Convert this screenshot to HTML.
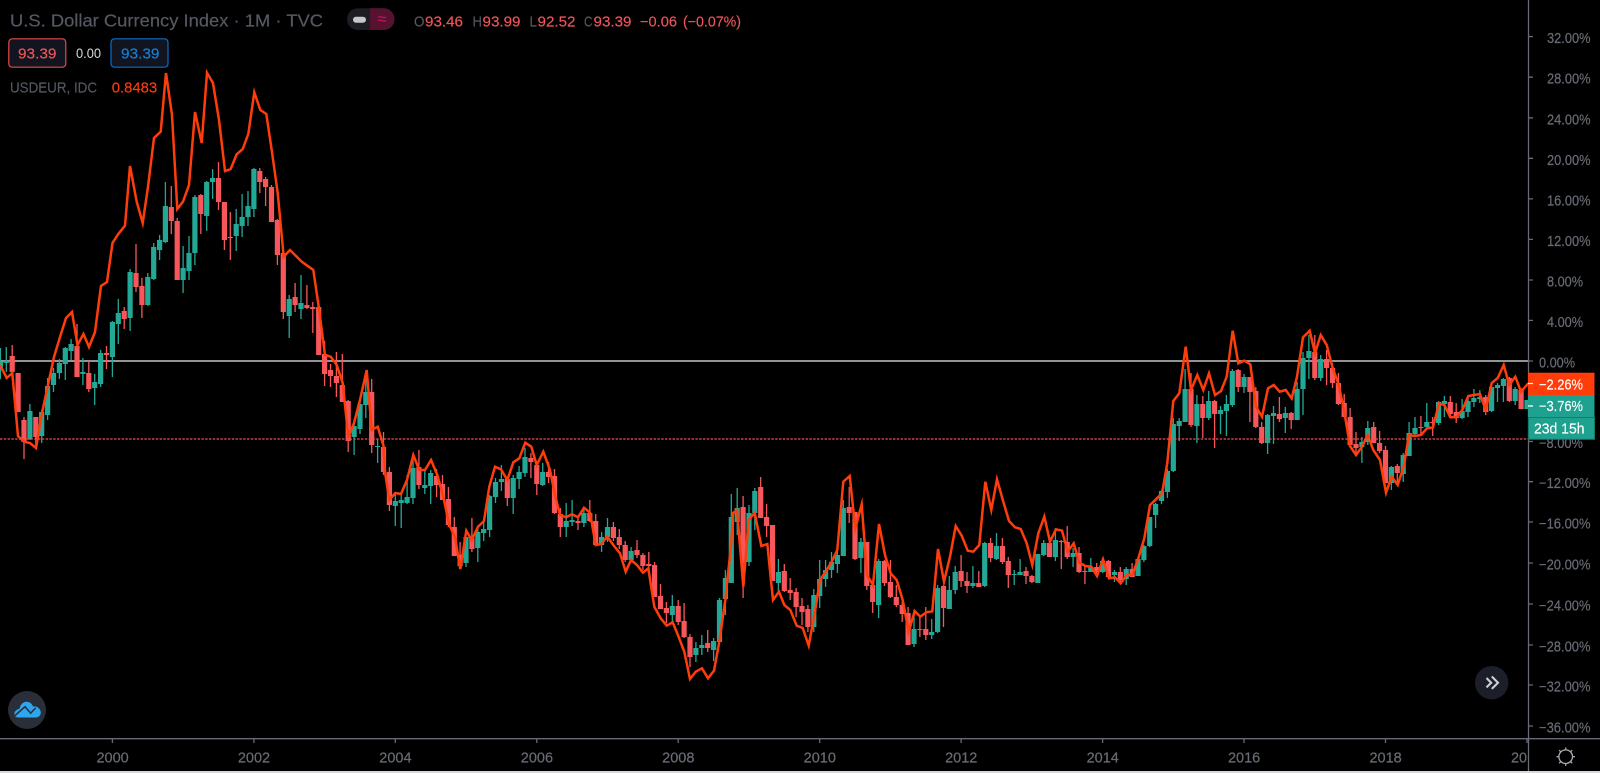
<!DOCTYPE html>
<html><head><meta charset="utf-8"><title>U.S. Dollar Currency Index</title>
<style>
html,body{margin:0;padding:0;background:#000;width:1600px;height:773px;overflow:hidden}
svg{display:block;font-family:"Liberation Sans",sans-serif}
</style></head><body>
<svg width="1600" height="773" viewBox="0 0 1600 773" xmlns="http://www.w3.org/2000/svg">
<defs><clipPath id="c"><rect x="0" y="0" width="1528" height="738"/></clipPath></defs>
<rect width="1600" height="773" fill="#000"/>
<rect x="0" y="771" width="1600" height="2" fill="#d8d8da"/>
<rect x="0" y="360.2" width="1528" height="1.6" fill="#b8b8bc"/>
<g clip-path="url(#c)" fill="none">
<g stroke="#24a896">
<path stroke-width="1.3" d="M0.4 348V379M6.3 347V372M29.9 404V440M41.7 410V443M47.6 378V420M53.5 368V392M59.4 359V379M65.3 347V380M71.1 339V360M82.9 358V385M94.7 374V405M100.6 350V387M112.4 321V377M118.3 299V344M130.1 269V331M147.8 273V306M153.7 243V280M159.6 235V260M165.4 182V243M183.1 246V293M189 236V280M194.9 195V265M206.7 181V231M212.6 169V199M236.2 209V251M242.1 194V237M248 191V226M253.9 168V217M289.2 295V338M301 275V319M354.1 420V455M360 399V434M365.8 378V418M377.6 439V463M395.3 494V526M401.2 495V528M407.1 475V504M413 458V504M424.8 469V494M430.7 470V504M466 537V567M477.8 527V562M483.7 520V541M489.6 495V537M495.5 478V503M501.4 465V491M513.2 475V514M519.1 466V489M525 448V477M542.7 463V486M566.2 503V537M572.1 500V526M583.9 508V527M601.6 532V552M607.5 518V542M631.1 547V562M672.3 595V622M695.9 642V662M701.8 635V655M713.6 638V661M719.5 598V642M725.4 570V615M731.3 494V583M737.2 488V535M749 505V566M754.8 488V530M778.4 559V592M813.8 589V632M819.7 560V608M825.6 560V587M831.5 552V578M837.4 547V573M843.3 500V556M860.9 538V573M878.6 559V618M914 610V647M931.7 619V639M937.6 585V633M949.3 576V609M955.2 566V594M972.9 566V588M984.7 542V587M996.5 533V560M1014.2 570V585M1020.1 559V575M1037.8 554V583M1043.7 540V556M1055.4 528V561M1073.1 548V567M1090.8 558V572M1102.6 558V573M1114.4 570V582M1126.2 567V585M1138 559V576M1143.9 545V562M1149.7 517V547M1155.6 503V528M1161.5 490V504M1167.4 469V498M1173.3 418V472M1179.2 418V441M1185.1 369V422M1196.9 395V443M1208.7 391V420M1220.5 406V434M1226.4 395V436M1232.3 369V407M1244 374V393M1267.6 414V454M1273.5 406V444M1285.3 407V433M1297.1 382V420M1303 352V415M1308.9 335V379M1320.7 355V381M1361.9 437V463M1367.8 421V445M1391.4 466V490M1403.2 453V482M1409.1 422V456M1415 417V436M1426.8 403V428M1438.6 401V425M1444.4 396V417M1462.1 399V419M1468 395V417M1473.9 389V407M1479.8 390V403M1491.6 387V412M1497.5 383V402M1503.4 378V402M1515.2 387V405M1527 400V409"/>
<path stroke-width="5.2" d="M0.4 362V370M6.3 361V363M29.9 411V439M41.7 412V436M47.6 386V415M53.5 373V385M59.4 363V373M65.3 348V364M71.1 344V351M82.9 372V374M94.7 382V388M100.6 353V384M112.4 322V357M118.3 313V324M130.1 272V318M147.8 277V305M153.7 247V279M159.6 240V250M165.4 206V242M183.1 268V280M189 253V271M194.9 197V253M206.7 182V216M212.6 178V182M236.2 224V236M242.1 217V226M248 206V217M253.9 169V209M289.2 299V316M301 303V309M354.1 426V437M360 404V429M365.8 392V405M377.6 446V447M395.3 501V506M401.2 500V503M407.1 497V503M413 468V498M424.8 485V488M430.7 473V486M466 537V563M477.8 532V548M483.7 529V533M489.6 496V530M495.5 482V497M501.4 479V482M513.2 478V498M519.1 472V479M525 457V473M542.7 472V485M566.2 521V527M572.1 520V522M583.9 513V523M601.6 537V545M607.5 527V537M631.1 551V560M672.3 606V615M695.9 648V655M701.8 645V648M713.6 641V650M719.5 600V642M725.4 578V599M731.3 517V583M737.2 508V522M749 513V562M754.8 491V513M778.4 572V583M813.8 595V627M819.7 579V596M825.6 570V579M831.5 562V570M837.4 555V564M843.3 508V556M860.9 542V558M878.6 561V605M914 629V644M931.7 632V635M937.6 588V632M949.3 590V609M955.2 572V590M972.9 583V586M984.7 543V586M996.5 546V559M1014.2 574V575M1020.1 572V575M1037.8 554V583M1043.7 543V555M1055.4 540V557M1073.1 553V557M1090.8 567V572M1102.6 561V572M1114.4 572V575M1126.2 569V579M1138 559V576M1143.9 546V560M1149.7 517V546M1155.6 504V515M1161.5 491V501M1167.4 471V492M1173.3 424V471M1179.2 421V426M1185.1 389V422M1196.9 404V426M1208.7 401V418M1220.5 410V414M1226.4 404V411M1232.3 371V405M1244 377V387M1267.6 415V443M1273.5 413V416M1285.3 413V418M1297.1 389V420M1303 358V389M1308.9 351V358M1320.7 359V378M1361.9 442V447M1367.8 428V442M1391.4 467V483M1403.2 455V474M1409.1 433V456M1415 428V434M1426.8 422V427M1438.6 402V423M1444.4 401V404M1462.1 411V418M1468 401V412M1473.9 398V402M1479.8 397V399M1491.6 387V411M1497.5 385V388M1503.4 379V386M1515.2 389V401M1527 400V409"/>
</g>
<g stroke="#f7565a">
<path stroke-width="1.3" d="M12.2 345V372M18.1 373V412M24 417V459M35.8 417V447M77 324V377M88.8 361V392M106.5 346V369M124.2 307V329M136 244V292M141.9 278V318M171.3 186V234M177.2 218V280M200.8 194V234M218.5 162V210M224.4 202V250M230.3 212V260M259.8 168V193M265.6 177V206M271.5 185V222M277.4 219V265M283.3 250V319M295.1 283V312M306.9 285V309M312.8 302V333M318.7 300V355M324.6 341V386M330.5 364V387M336.4 352V397M342.3 354V402M348.2 400V452M371.7 379V453M383.5 432V475M389.4 467V511M418.9 450V489M436.6 469V497M442.5 475V500M448.4 487V527M454.3 517V556M460.1 542V569M471.9 518V552M507.3 478V506M530.9 453V478M536.8 465V495M548.6 462V483M554.5 469V514M560.3 508V537M578 518V530M589.8 500V522M595.7 514V545M613.4 522V541M619.3 529V549M625.2 541V562M637 540V558M642.9 553V570M648.8 552V570M654.6 562V597M660.5 584V609M666.4 602V623M678.2 600V625M684.1 603V638M690 634V667M707.7 630V652M743.1 496V598M760.7 477V518M766.6 504V537M772.5 525V581M784.3 564V592M790.2 578V600M796.1 588V617M802 598V625M807.9 605V632M849.2 487V523M855 512V560M866.8 542V590M872.7 583V613M884.5 560V586M890.4 560V598M896.3 585V607M902.2 602V622M908.1 607V645M919.9 616V637M925.8 607V640M943.5 585V627M961.1 555V587M967 572V593M978.8 571V587M990.6 538V562M1002.4 538V564M1008.3 557V588M1026 567V584M1031.9 575V583M1049.5 542V557M1061.3 540V569M1067.2 526V559M1079 547V573M1084.9 566V584M1096.7 563V576M1108.5 560V577M1120.3 567V583M1132.1 563V577M1191 373V427M1202.8 396V438M1214.6 400V448M1238.2 369V392M1249.9 377V422M1255.8 387V428M1261.7 422V444M1279.4 397V422M1291.2 412V429M1314.8 335V380M1326.6 350V385M1332.5 363V388M1338.4 373V405M1344.2 394V417M1350.1 408V445M1356 432V453M1373.7 422V443M1379.6 431V453M1385.5 446V483M1397.3 464V485M1420.9 416V434M1432.7 417V436M1450.3 396V418M1456.2 403V423M1485.7 395V415M1509.3 377V402M1521.1 388V409"/>
<path stroke-width="5.2" d="M12.2 356V372M18.1 373V412M24 420V442M35.8 417V437M77 346V377M88.8 373V389M106.5 353V355M124.2 311V319M136 273V287M141.9 286V305M171.3 207V221M177.2 221V280M200.8 195V214M218.5 178V202M224.4 202V240M230.3 237V238M259.8 171V182M265.6 179V187M271.5 187V222M277.4 220V255M283.3 253V312M295.1 297V305M306.9 305V308M312.8 307V309M318.7 307V355M324.6 354V374M330.5 370V376M336.4 376V383M342.3 385V402M348.2 401V441M371.7 392V445M383.5 447V472M389.4 472V505M418.9 467V485M436.6 476V485M442.5 484V500M448.4 499V525M454.3 527V556M460.1 555V566M471.9 538V549M507.3 479V498M530.9 458V462M536.8 465V484M548.6 472V477M554.5 476V513M560.3 514V527M578 521V523M589.8 513V521M595.7 521V545M613.4 527V538M619.3 537V545M625.2 545V560M637 550V555M642.9 555V566M648.8 564V566M654.6 565V597M660.5 596V609M666.4 608V613M678.2 606V622M684.1 621V637M690 637V657M707.7 643V648M743.1 507V563M760.7 487V518M766.6 517V526M772.5 525V581M784.3 571V591M790.2 590V593M796.1 592V607M802 606V612M807.9 609V627M849.2 507V513M855 512V559M866.8 542V586M872.7 585V602M884.5 561V583M890.4 582V597M896.3 597V605M902.2 605V614M908.1 613V645M919.9 629V630M925.8 629V635M943.5 586V608M961.1 571V581M967 581V586M978.8 583V587M990.6 543V558M1002.4 546V562M1008.3 561V575M1026 571V576M1031.9 576V582M1049.5 543V557M1061.3 541V542M1067.2 542V557M1079 553V572M1084.9 571V572M1096.7 567V572M1108.5 561V577M1120.3 572V580M1132.1 569V577M1191 389V425M1202.8 404V418M1214.6 401V414M1238.2 370V387M1249.9 377V392M1255.8 391V427M1261.7 427V443M1279.4 414V419M1291.2 413V420M1314.8 352V378M1326.6 359V368M1332.5 368V383M1338.4 383V404M1344.2 403V417M1350.1 417V445M1356 444V448M1373.7 427V443M1379.6 443V451M1385.5 450V483M1397.3 466V473M1420.9 427V428M1432.7 422V423M1450.3 402V414M1456.2 412V418M1485.7 397V412M1509.3 378V401M1521.1 390V409"/>
</g>
<polyline stroke="#ff3d0b" stroke-width="2.5" stroke-linejoin="miter" stroke-miterlimit="6" points="0,365 6.7,378 12.3,373 18,436 24,441.7 30,443 36,448 42,413 48,385 54,357 60,337 66,318 72,312 77.5,345 83.5,334 89,347 95,332 101,286 107,282 112.5,243 118.3,234 125,225.7 130,166 136.7,201.7 142.7,223 148,186.7 154,138 160.7,131.7 166,73 172,115 177.3,209 183,201.7 189,185 195,112 201.7,143 207,72.7 213,83 219,120 225,171 230.7,169 236.7,154.3 242.7,149 248.3,134 254.3,92.3 260.3,110 266.3,114 271.7,150 277.7,193 283.7,256.7 290,250 301.7,261.7 313.3,270 318.7,306.7 325,355 330.7,356.7 336.7,365 342.7,383 348.3,436.7 354,423 360,400 366.7,370 371.7,430 377.7,426.7 383.7,446.7 385,472 389.3,500 395.3,493 401,494 407,480 413.3,455 419.3,470 425,470 431,460 437.3,475 443.3,496.7 449.3,525 455,537 460.3,569 466.3,530.7 471.7,540 478,526.7 484,521 489.3,486.7 495,466.7 501,469.3 507.3,480 513.3,462.3 519.3,458.3 525.3,442.7 531.3,446.7 536.7,465 543.3,451.7 550,470 555,495 560,515 566,517.3 572,514.3 578,517.3 584,507.7 590,512.7 595.7,545 601.3,544 607.3,536.7 613.3,545 620,553.3 625.7,571.7 631,560 637,565 643,572.7 648.3,568.3 654.3,606.7 660.7,618.3 666.7,625.7 672.7,622.3 678.3,636 684.3,651.7 690,679 695.7,671.7 702,668.3 708,678.3 714,670.7 719.3,641.7 725.3,600 731.3,543 733,513 737,510 743.3,586.7 748.7,520 754.7,512.7 761.3,546 767.3,544 773,600 779,591.7 784.3,605 790.3,610 796.7,625.7 802.7,628 808.7,645.7 814.7,613 820,580 825.7,571.7 831.7,561.7 837.3,550 843.3,481.7 849.7,476 855.3,528.3 861.7,504.3 867,575 873,585 879,524 885,555 890.7,573.3 896.7,580 902.7,600 908.7,631.7 914.7,611 920.3,616.7 926.3,612.3 932.3,611.3 938,549 944,581.7 950,556.7 955.7,526 961.7,535.7 967.7,550.7 973.3,551.7 979.3,545 985.3,481.7 991.3,510 997,479.3 1003.3,501.7 1009,521 1015,527.3 1020.7,529 1026.7,543.3 1032.3,565 1038.3,533.3 1044.3,516.7 1050,541.7 1056,529.3 1062,530.7 1067.7,551.7 1073.7,543.3 1079.3,562.7 1085.3,566 1091.3,566.7 1097,576 1103,559.3 1109,578.3 1115,577.3 1120.7,583.3 1126.7,575 1132.3,575 1138.3,558.3 1144.3,538.3 1150,505 1156,499.3 1162,493.3 1167.3,463 1173.3,401 1179.3,393.3 1185.7,346.7 1191,390 1197.3,375 1203.3,390 1209,373.3 1215,395 1221,391 1226.7,376.7 1232.7,330.7 1238.3,363.3 1244.3,360.7 1250.3,364.3 1256,406.7 1262,416.7 1268,388.3 1273.7,385 1279.7,391.7 1285.7,390 1291.7,398.3 1297,376.7 1303,337.3 1309.7,330.7 1315,353.3 1320.7,335 1326.7,345 1332.7,368.3 1338.3,383.3 1344,410 1350,446 1356,455 1362,446.7 1367.7,435 1373.3,450 1380,460 1386,492.7 1391.7,476.7 1397.7,485 1403.7,466.7 1409,435 1415,436 1421,435 1427,428.3 1433,427.3 1439,403.3 1444.3,405 1450.3,417.3 1456.3,417.3 1462.3,410 1468.3,396 1474.3,395 1480,394 1485.7,410 1491.7,383 1497.7,378 1503.7,365 1509.3,385 1515.3,376.7 1521,391.7 1528.3,383.3"/>
</g>
<line x1="0" y1="439" x2="1528" y2="439" stroke="#f0504f" stroke-width="1.2" stroke-dasharray="2.4 1.4"/>
<g stroke="#686b75" fill="none" stroke-width="1.3">
<path d="M1528.5 0V771M0 738.7H1600"/>
<path d="M1528 36.6h5M1528 77.2h5M1528 117.8h5M1528 158.3h5M1528 198.9h5M1528 239.4h5M1528 280h5M1528 320.4h5M1528 361h5M1528 441.5h5M1528 481.7h5M1528 522h5M1528 563h5M1528 604h5M1528 645h5M1528 685h5M1528 726h5"/>
<path d="M112.4 739v4M253.9 739v4M395.3 739v4M536.8 739v4M678.2 739v4M819.7 739v4M961.1 739v4M1102.6 739v4M1244 739v4M1385.5 739v4M1527 739v4"/>
</g>
<!-- price axis labels -->
<g fill="#686b75" stroke="#686b75" stroke-width="0.2" font-size="14.5">
<text x="1547" y="43" textLength="43.5" lengthAdjust="spacingAndGlyphs">32.00%</text>
<text x="1547" y="83.7" textLength="43.5" lengthAdjust="spacingAndGlyphs">28.00%</text>
<text x="1547" y="124.3" textLength="43.5" lengthAdjust="spacingAndGlyphs">24.00%</text>
<text x="1547" y="164.8" textLength="43.5" lengthAdjust="spacingAndGlyphs">20.00%</text>
<text x="1547" y="205.4" textLength="43.5" lengthAdjust="spacingAndGlyphs">16.00%</text>
<text x="1547" y="245.9" textLength="43.5" lengthAdjust="spacingAndGlyphs">12.00%</text>
<text x="1547" y="286.5" textLength="36" lengthAdjust="spacingAndGlyphs">8.00%</text>
<text x="1547" y="326.9" textLength="36" lengthAdjust="spacingAndGlyphs">4.00%</text>
<text x="1539" y="367.5" textLength="36" lengthAdjust="spacingAndGlyphs">0.00%</text>
<text x="1539" y="448" textLength="44" lengthAdjust="spacingAndGlyphs">−8.00%</text>
<text x="1539" y="488.2" textLength="51.5" lengthAdjust="spacingAndGlyphs">−12.00%</text>
<text x="1539" y="528.5" textLength="51.5" lengthAdjust="spacingAndGlyphs">−16.00%</text>
<text x="1539" y="569.5" textLength="51.5" lengthAdjust="spacingAndGlyphs">−20.00%</text>
<text x="1539" y="610.5" textLength="51.5" lengthAdjust="spacingAndGlyphs">−24.00%</text>
<text x="1539" y="651.5" textLength="51.5" lengthAdjust="spacingAndGlyphs">−28.00%</text>
<text x="1539" y="691.5" textLength="51.5" lengthAdjust="spacingAndGlyphs">−32.00%</text>
<text x="1539" y="732.5" textLength="51.5" lengthAdjust="spacingAndGlyphs">−36.00%</text>
</g>
<!-- tags -->
<rect x="1528" y="372.7" width="66.5" height="22.3" fill="#ff3d0b"/>
<rect x="1528" y="395" width="66.5" height="22" fill="#1fa18f"/>
<rect x="1528.5" y="417.5" width="66" height="21.8" fill="#1fa18f" stroke="#147a6d" stroke-width="1"/>
<path d="M1528 383.5h5M1528 406h5" stroke="#fff" stroke-width="1.2"/>
<g fill="#fff" stroke="#fff" stroke-width="0.15" font-size="14.5">
<text x="1539" y="389.5" textLength="44" lengthAdjust="spacingAndGlyphs">−2.26%</text>
<text x="1539" y="411" textLength="44" lengthAdjust="spacingAndGlyphs">−3.76%</text>
<text x="1534" y="433.5" textLength="50.5" lengthAdjust="spacingAndGlyphs">23d 15h</text>
</g>
<!-- time axis labels -->
<g fill="#686b75" stroke="#686b75" stroke-width="0.2" font-size="14.5" text-anchor="middle">
<text x="112.6" y="762.5">2000</text>
<text x="254" y="762.5">2002</text>
<text x="395.4" y="762.5">2004</text>
<text x="536.9" y="762.5">2006</text>
<text x="678.3" y="762.5">2008</text>
<text x="819.8" y="762.5">2010</text>
<text x="961.2" y="762.5">2012</text>
<text x="1102.7" y="762.5">2014</text>
<text x="1244.1" y="762.5">2016</text>
<text x="1385.6" y="762.5">2018</text>
</g>
<text x="1511" y="762.5" fill="#686b75" stroke="#686b75" stroke-width="0.2" font-size="14.5" textLength="16" lengthAdjust="spacingAndGlyphs">20</text>
<!-- legend -->
<text x="10" y="26.5" fill="#555863" stroke="#555863" stroke-width="0.2" font-size="17.5" textLength="313" lengthAdjust="spacingAndGlyphs">U.S. Dollar Currency Index · 1M · TVC</text>
<rect x="347" y="8.3" width="47.5" height="21.7" rx="10.8" fill="#1c1e24"/>
<path d="M370 8.3h13.7a10.8 10.8 0 0 1 0 21.7H370z" fill="#571230"/>
<rect x="353" y="16.7" width="13" height="6" rx="3" fill="#c6c7cc"/>
<text x="382" y="24.5" fill="#c2185b" font-size="17" text-anchor="middle">≈</text>
<g font-size="14.5" stroke-width="0.15">
<text x="414" y="26.7" fill="#555863" stroke="#555863" textLength="10.5" lengthAdjust="spacingAndGlyphs">O</text>
<text x="425" y="26.7" fill="#f2555a" stroke="#f2555a" textLength="38" lengthAdjust="spacingAndGlyphs">93.46</text>
<text x="472.5" y="26.7" fill="#555863" stroke="#555863" textLength="9.5" lengthAdjust="spacingAndGlyphs">H</text>
<text x="482.5" y="26.7" fill="#f2555a" stroke="#f2555a" textLength="38" lengthAdjust="spacingAndGlyphs">93.99</text>
<text x="529.5" y="26.7" fill="#555863" stroke="#555863" textLength="7.5" lengthAdjust="spacingAndGlyphs">L</text>
<text x="537.5" y="26.7" fill="#f2555a" stroke="#f2555a" textLength="38" lengthAdjust="spacingAndGlyphs">92.52</text>
<text x="584" y="26.7" fill="#555863" stroke="#555863" textLength="8.5" lengthAdjust="spacingAndGlyphs">C</text>
<text x="593.5" y="26.7" fill="#f2555a" stroke="#f2555a" textLength="38" lengthAdjust="spacingAndGlyphs">93.39</text>
<text x="640" y="26.7" fill="#f2555a" stroke="#f2555a" textLength="37" lengthAdjust="spacingAndGlyphs">−0.06</text>
<text x="683" y="26.7" fill="#f2555a" stroke="#f2555a" textLength="58" lengthAdjust="spacingAndGlyphs">(−0.07%)</text>
</g>
<rect x="8.8" y="38.8" width="57" height="28.4" rx="3.5" fill="#121520" stroke="#e2494c" stroke-width="1.2"/>
<text x="18" y="58.3" fill="#f2555a" stroke="#f2555a" stroke-width="0.15" font-size="15" textLength="38.5" lengthAdjust="spacingAndGlyphs">93.39</text>
<text x="76" y="58" fill="#d8d9dc" font-size="14" textLength="25" lengthAdjust="spacingAndGlyphs">0.00</text>
<rect x="111" y="38.8" width="57" height="28.4" rx="3.5" fill="#121520" stroke="#0a6ec4" stroke-width="1.2"/>
<text x="121" y="58.3" fill="#1580d6" stroke="#1580d6" stroke-width="0.15" font-size="15" textLength="38.5" lengthAdjust="spacingAndGlyphs">93.39</text>
<text x="10" y="92.7" fill="#555863" stroke="#555863" stroke-width="0.15" font-size="15" textLength="87" lengthAdjust="spacingAndGlyphs">USDEUR, IDC</text>
<text x="111.7" y="92.7" fill="#ff3d0b" stroke="#ff3d0b" stroke-width="0.15" font-size="15" textLength="45.5" lengthAdjust="spacingAndGlyphs">0.8483</text>
<!-- logo -->
<circle cx="27" cy="710" r="19" fill="#2a2e39"/>
<path d="M18 717.5C14.5 717.5 13.2 713 15.5 711C17 709.4 18.5 709 19.5 708.8C20.5 704.5 23 701.8 26.5 701.8C30 701.8 32 704 33 706.5C37 705.5 40.8 709 40.8 712.5C40.8 715.5 38.5 717.5 36 717.5Z" fill="#2ea6ee"/>
<polyline points="15,715.5 25,706.7 30.7,713.3 35.7,707.7" fill="none" stroke="#2a2e39" stroke-width="1.5"/>
<!-- scroll button -->
<circle cx="1491.7" cy="682.7" r="16.7" fill="#1c1f29"/>
<path d="M1486.5 678l4.7 4.7-4.7 4.7M1491.8 676.5l6.2 6.2-6.2 6.2" fill="none" stroke="#cfd0d5" stroke-width="2.1"/>
<!-- gear -->
<g fill="none" stroke="#a7aab3" stroke-width="1.3">
<circle cx="1565.7" cy="756.7" r="6.8"/>
<path d="M1565.7 747.5v2.4M1565.7 763.5v2.4M1556.5 756.7h2.4M1572.5 756.7h2.4M1559.2 750.2l1.7 1.7M1570.5 761.5l1.7 1.7M1559.2 763.2l1.7-1.7M1570.5 751.9l1.7-1.7"/>
</g>
</svg>
</body></html>
